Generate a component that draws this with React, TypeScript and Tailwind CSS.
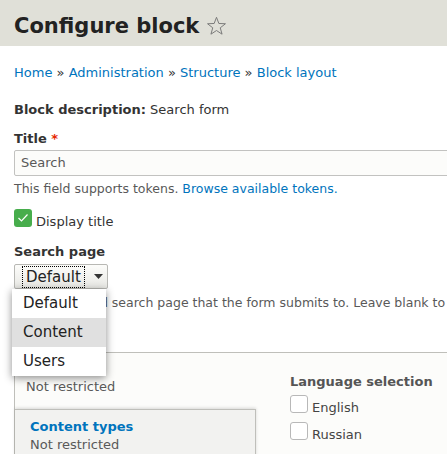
import React from "react";

const font = { fontFamily: '"DejaVu Sans", Verdana, sans-serif' };

function Check({ checked }: { checked?: boolean }) {
  if (checked) {
    return (
      <span className="inline-flex h-[18px] w-[18px] shrink-0 items-center justify-center rounded-[3px] bg-[#47ad4c]">
        <svg width="12" height="10" viewBox="0 0 12 10">
          <path d="M1.5 5 L4.5 8 L10.5 1.5" fill="none" stroke="#fff" strokeWidth="1.2" />
        </svg>
      </span>
    );
  }
  return <span className="inline-block h-[18px] w-[18px] shrink-0 rounded-[3px] border border-[#b8b8b8] bg-white" />;
}

export default function App() {
  return (
    <div className="relative h-[454px] w-[447px] overflow-hidden bg-white text-[#333]" style={font}>
      <div className="h-[46px] bg-[#e0e0d8] pl-[14px] pt-[12px]">
        <h1 className="flex items-center text-[21px] font-bold leading-[28px] text-[#222]">
          Configure block
          <svg className="ml-[7px]" width="21" height="20" viewBox="0 0 24 23">
            <path
              d="M12 1.5 L14.7 8.6 L22.3 8.9 L16.3 13.6 L18.4 20.9 L12 16.7 L5.6 20.9 L7.7 13.6 L1.7 8.9 L9.3 8.6 Z"
              fill="none"
              stroke="#777"
              strokeWidth="1.1"
              strokeLinejoin="round"
            />
          </svg>
        </h1>
      </div>

      <div className="px-[14px]">
        <div className="mt-[17px] text-[13px] leading-[20px] text-[#0074bd]">
          Home <span className="text-[#333]">»</span> Administration <span className="text-[#333]">»</span> Structure{" "}
          <span className="text-[#333]">»</span> Block layout
        </div>

        <div className="mt-[17px] text-[13px] leading-[20px]">
          <span className="font-bold">Block description:</span> Search form
        </div>

        <div className="mt-[11px] text-[13px] font-bold leading-[16px]">
          Title <span className="text-[#e62600]">*</span>
        </div>
        <div className="mt-[3px] mr-[-20px] flex h-[26px] items-center rounded-[2px] border border-[#c2c2c0] bg-[#fcfcfa] px-[6px] text-[13px] text-[#595959]">
          Search
        </div>
        <div className="mt-[3px] text-[12.5px] leading-[20px] text-[#595959]">
          This field supports tokens. <span className="text-[#0074bd]">Browse available tokens.</span>
        </div>

        <div className="mt-[10px] flex items-start gap-[4px]">
          <Check checked />
          <span className="mt-[5px] text-[13px] leading-[16px]">Display title</span>
        </div>

        <div className="mt-[14px] text-[13px] font-bold leading-[16px]">Search page</div>
        <div className="mt-[4px] flex h-[25px] w-[94px] items-center rounded-[2px] border border-[#b8b8b4] bg-gradient-to-b from-[#fcfcfa] to-[#e8e8e4] pl-[7px] text-[15px]">
          <span className="border border-dotted border-[#000] px-[3px] leading-[20px] text-[#222]">Default</span>
          <svg className="ml-[9px]" width="9" height="6" viewBox="0 0 9 6">
            <path d="M0 0 H9 L4.5 5 Z" fill="#333" />
          </svg>
        </div>
        <div className="mt-[4px] whitespace-nowrap text-[12.5px] leading-[20px] text-[#595959]">
          The configured search page that the form submits to. Leave blank to use the default search page.
        </div>

        <div className="mt-[39px] mr-[-20px] flex h-[120px] border border-[#bfbfba] bg-[#fcfcfa]">
          <div className="w-[241px] shrink-0 bg-[#f2f2f0]">
            <div className="h-[56px] bg-[#fcfcfa] pl-[11px] pt-[7px]">
              <div className="text-[13px] font-bold leading-[18px] text-[#0074bd]">Language</div>
              <div className="text-[13px] leading-[18px] text-[#595959]">Not restricted</div>
            </div>
            <div className="h-[64px] border-t border-r border-[#bfbfba] bg-[#f2f2f0] pl-[15px] pt-[8px] shadow-[0_-1px_3px_rgba(0,0,0,0.15)]">
              <div className="text-[13px] font-bold leading-[18px] text-[#0074bd]">Content types</div>
              <div className="text-[13px] leading-[18px] text-[#595959]">Not restricted</div>
            </div>
          </div>
          <div className="pl-[34px] pt-[20px]">
            <div className="text-[13px] font-bold leading-[18px] text-[#555]">Language selection</div>
            <div className="mt-[4px] flex items-start gap-[4px]">
              <Check />
              <span className="mt-[5px] text-[13px] leading-[16px] text-[#444]">English</span>
            </div>
            <div className="mt-[6px] flex items-start gap-[4px]">
              <Check />
              <span className="mt-[5px] text-[13px] leading-[16px] text-[#444]">Russian</span>
            </div>
          </div>
        </div>
      </div>

      <div className="absolute left-[12px] top-[289px] w-[94px] bg-white text-[15px] text-[#222] shadow-[0_2px_8px_rgba(0,0,0,0.45)]">
        <div className="flex h-[29px] items-center pl-[11px]">Default</div>
        <div className="flex h-[29px] items-center bg-[#e0e0e0] pl-[11px]">Content</div>
        <div className="flex h-[29px] items-center pl-[11px]">Users</div>
      </div>
    </div>
  );
}
